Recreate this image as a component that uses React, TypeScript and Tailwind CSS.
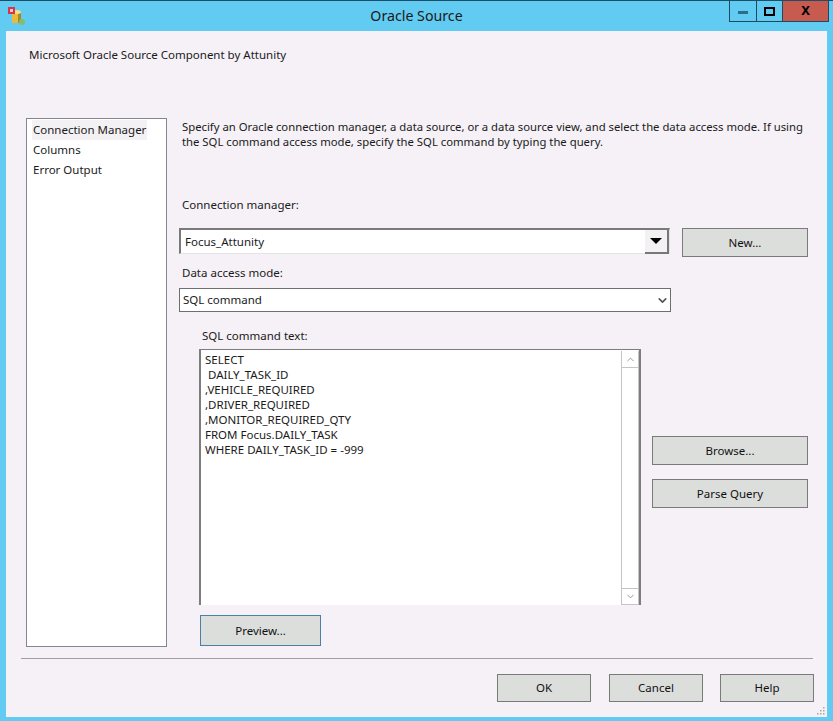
import { ChevronDown, ChevronUp } from "lucide-react";

const sqlLines = [
  "SELECT",
  " DAILY_TASK_ID",
  ",VEHICLE_REQUIRED",
  ",DRIVER_REQUIRED",
  ",MONITOR_REQUIRED_QTY",
  "FROM Focus.DAILY_TASK",
  "WHERE DAILY_TASK_ID = -999",
];

const AppIcon = () => (
  <svg width="18" height="18" viewBox="0 0 18 18" className="ml-[8px] mt-[6px]">
    <rect x="4" y="5" width="9" height="11" fill="#e8bc3a" />
    <rect x="10" y="5" width="3" height="11" fill="#a8862e" />
    <ellipse cx="8.5" cy="5" rx="4.5" ry="2" fill="#f4e08a" />
    <circle cx="14" cy="15" r="3" fill="#86bd6c" />
    <rect x="0" y="0" width="7" height="7" fill="#d8344c" />
    <rect x="2" y="2" width="3" height="3" fill="#f6c9d0" />
  </svg>
);

const Button = ({ label, className }: { label: string; className: string }) => (
  <div className={`flex items-center justify-center bg-[#dcdedc] border border-[#7a7a7a] text-[11.5px] text-[#111] ${className}`}>
    {label}
  </div>
);

const App = () => {
  return (
    <div className="w-[833px] h-[721px] bg-[#62cbf1] border-t border-[#1d4f68] font-['Noto_Sans','Liberation_Sans',sans-serif] text-[#1a1a1a] overflow-hidden">
      {/* Title bar */}
      <div className="relative flex h-[30px]">
        <AppIcon />
        <div className="flex-1 pr-[26px] text-center text-[14.2px] leading-[30px] text-[#1a1a1a]">Oracle Source</div>
        <div className="absolute right-[4px] top-0 flex h-[21px] border border-t-0 border-[#1f4a5e]">
          <div className="flex w-[27px] items-center justify-center border-r border-[#1f4a5e]">
            <div className="mt-[3px] h-[3px] w-[10px] bg-[#2c6d88]" />
          </div>
          <div className="flex w-[26px] items-center justify-center border-r border-[#1f4a5e]">
            <div className="h-[9px] w-[11px] border-2 border-black" />
          </div>
          <div className="flex w-[45px] items-center justify-center bg-[#c75b50] text-[13px] font-bold text-black">X</div>
        </div>
      </div>

      {/* Client area */}
      <div className="relative ml-[6px] flex h-[686px] w-[821px] flex-col bg-[#f5f1f6]">
        <div className="h-[87px] pl-[23px] pt-[15px] text-[11.5px] leading-[18px]">
          Microsoft Oracle Source Component by Attunity
        </div>

        <div className="flex h-[529px] pl-[20px]">
          {/* Page list */}
          <div className="h-[529px] w-[141px] border border-[#85858f] bg-white pl-[5px] pt-[1px] text-[11.5px] leading-[20px]">
            <div className="w-[115px] bg-[#f3f1f4] pl-[1px]">Connection Manager</div>
            <div className="pl-[1px]">Columns</div>
            <div className="pl-[1px]">Error Output</div>
          </div>

          <div className="ml-[12px] w-[642px]">
            <p className="whitespace-nowrap pl-[3px] pt-[1px] text-[11.3px] leading-[15px]">
              Specify an Oracle connection manager, a data source, or a data source view, and select the data access mode. If using
              <br />
              the SQL command access mode, specify the SQL command by typing the query.
            </p>

            <div className="mt-[47px] pl-[3px] text-[11.5px] leading-[18px]">Connection manager:</div>

            <div className="mt-[14px] flex items-start">
              <div className="flex h-[26px] w-[491px] items-center justify-between border-l-2 border-t-2 border-[#7a7a7a] border-b border-r border-b-[#e4e4e4] border-r-[#e4e4e4] bg-white pl-[4px] text-[11.5px]">
                <span>Focus_Attunity</span>
                <div className="flex h-[24px] w-[24px] items-center justify-center border-b-2 border-r-2 border-[#777] bg-[#f3f1f4]">
                  <div className="h-0 w-0 border-x-[6px] border-t-[6px] border-x-transparent border-t-black" />
                </div>
              </div>
              <Button label="New..." className="ml-[12px] h-[29px] w-[126px]" />
            </div>

            <div className="mt-[7px] pl-[3px] text-[11.5px] leading-[18px]">Data access mode:</div>

            <div className="mt-[6px] flex h-[24px] w-[492px] items-center justify-between border border-[#6f6f6f] bg-white pl-[3px] pr-[1px] text-[11.5px]">
              <span>SQL command</span>
              <ChevronDown size={13} strokeWidth={3} className="text-[#555]" />
            </div>

            <div className="mt-[15px] pl-[23px] text-[11.5px] leading-[18px]">SQL command text:</div>

            <div className="flex">
              <div className="ml-[20px] mt-[4px] flex h-[256px] w-[442px] border-x-2 border-t border-[#7d7d7d] bg-white">
                <pre className="flex-1 pl-[4px] pt-[2px] font-['Noto_Sans','Liberation_Sans',sans-serif] text-[11.5px] leading-[15px]">
                  {sqlLines.join("\n")}
                </pre>
                <div className="mt-[1px] flex w-[18px] flex-col justify-between border-x border-[#c4c4c4]">
                  <div className="flex h-[17px] items-center justify-center border-b border-[#c4c4c4]">
                    <ChevronUp size={11} className="text-[#8f8f8f]" />
                  </div>
                  <div className="flex h-[17px] items-center justify-center border-y border-[#c4c4c4]">
                    <ChevronDown size={11} className="text-[#8f8f8f]" />
                  </div>
                </div>
              </div>
              <div className="ml-[11px] mt-[91px] flex flex-col gap-[14px]">
                <Button label="Browse..." className="h-[29px] w-[156px]" />
                <Button label="Parse Query" className="h-[29px] w-[156px]" />
              </div>
            </div>

            <Button label="Preview..." className="ml-[21px] mt-[10px] h-[31px] w-[121px] !border-[#4a7fa8]" />
          </div>
        </div>

        <div className="mx-[15px] mt-[11px] h-px w-[792px] bg-[#a0a0a0]" />

        <div className="mt-[15px] flex justify-end gap-[17px] pr-[13px]">
          <Button label="OK" className="mr-[1px] h-[28px] w-[94px]" />
          <Button label="Cancel" className="h-[28px] w-[94px]" />
          <Button label="Help" className="h-[28px] w-[94px]" />
        </div>

        {/* Resize grip */}
        <svg width="10" height="10" viewBox="0 0 10 10" className="absolute bottom-[1px] right-[1px]" fill="#a8a8a8">
          <rect x="7" y="1" width="1.5" height="1.5" />
          <rect x="4" y="4" width="1.5" height="1.5" />
          <rect x="7" y="4" width="1.5" height="1.5" />
          <rect x="1" y="7" width="1.5" height="1.5" />
          <rect x="4" y="7" width="1.5" height="1.5" />
          <rect x="7" y="7" width="1.5" height="1.5" />
        </svg>
      </div>
    </div>
  );
};

export default App;
